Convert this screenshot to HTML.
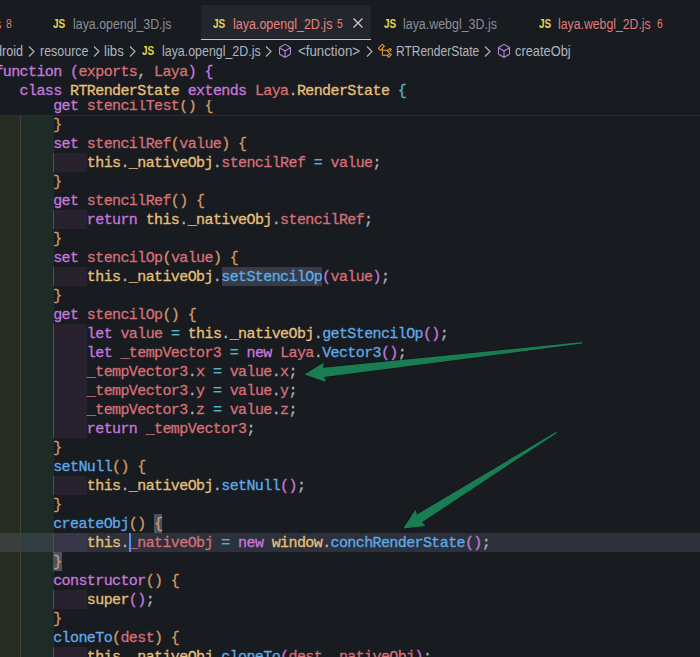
<!DOCTYPE html>
<html><head><meta charset="utf-8">
<style>
html,body{margin:0;padding:0;width:700px;height:657px;overflow:hidden;background:#181b20}
body{position:relative;font-family:"Liberation Sans",sans-serif}
.abs{position:absolute}
.ln{position:absolute;left:-14.0px;margin-top:1px;height:19px;line-height:19px;font-family:"Liberation Mono",monospace;font-size:15px;letter-spacing:-0.6px;-webkit-text-stroke:0.3px;white-space:pre;color:#abb2bf}
.hl{background:#373c47}
.bm{background:#3e4350;box-shadow:inset 0 0 0 1px #4b505c}
.ui{position:absolute;font-size:14px;white-space:pre;line-height:16px;transform-origin:0 0}
.js{position:absolute;font-weight:bold;font-size:12.5px;color:#e3d64a;line-height:16px;transform:scaleX(0.8);transform-origin:0 0}
</style></head><body>
<div class="abs" style="left:201px;top:5px;width:170px;height:35px;background:#23262d"></div>
<div class="abs" style="left:201px;top:39px;width:170px;height:1px;background:#c8c8c8"></div>
<div class="ui" style="left:-5px;top:16px;color:#de7e7a;transform:scaleX(0.9)">s</div>
<div class="ui" style="font-size:13px;margin-top:0px;left:5.5px;top:16px;color:#de7e7a;transform:scaleX(0.8)">8</div>
<div class="js" style="left:53px;top:16px">JS</div>
<div class="ui" style="left:73.1px;top:16px;color:#8a8f98;transform:scaleX(0.885)">laya.opengl_3D.js</div>
<div class="js" style="left:213px;top:16px">JS</div>
<div class="ui" style="left:232.5px;top:16px;color:#e8827f;transform:scaleX(0.893)">laya.opengl_2D.js</div>
<div class="ui" style="font-size:13px;margin-top:0px;left:336.5px;top:16px;color:#e8827f;transform:scaleX(0.8)">5</div>
<svg class="abs" style="left:352.5px;top:18px" width="10" height="10" viewBox="0 0 10 10"><path d="M0.5 0.5L9.5 9.5M9.5 0.5L0.5 9.5" stroke="#d0d0d0" stroke-width="1.2"/></svg>
<div class="js" style="left:384px;top:16px">JS</div>
<div class="ui" style="left:403.4px;top:16px;color:#8a8f98;transform:scaleX(0.887)">laya.webgl_3D.js</div>
<div class="js" style="left:539px;top:16px">JS</div>
<div class="ui" style="left:558.1px;top:16px;color:#de7e7a;transform:scaleX(0.876)">laya.webgl_2D.js</div>
<div class="ui" style="font-size:13px;margin-top:0px;left:656.5px;top:16px;color:#de7e7a;transform:scaleX(0.8)">6</div>
<div class="ui" style="left:-5.5px;top:43px;color:#b0b6bf;transform:scaleX(0.9)">droid</div>
<svg class="abs" style="left:27.5px;top:46px" width="7" height="11" viewBox="0 0 7 11"><path d="M1 0.5L6 5.5L1 10.5" fill="none" stroke="#b0b6bf" stroke-width="1.1"/></svg>
<svg class="abs" style="left:93px;top:46px" width="7" height="11" viewBox="0 0 7 11"><path d="M1 0.5L6 5.5L1 10.5" fill="none" stroke="#b0b6bf" stroke-width="1.1"/></svg>
<svg class="abs" style="left:129px;top:46px" width="7" height="11" viewBox="0 0 7 11"><path d="M1 0.5L6 5.5L1 10.5" fill="none" stroke="#b0b6bf" stroke-width="1.1"/></svg>
<svg class="abs" style="left:264.5px;top:46px" width="7" height="11" viewBox="0 0 7 11"><path d="M1 0.5L6 5.5L1 10.5" fill="none" stroke="#b0b6bf" stroke-width="1.1"/></svg>
<svg class="abs" style="left:365.5px;top:46px" width="7" height="11" viewBox="0 0 7 11"><path d="M1 0.5L6 5.5L1 10.5" fill="none" stroke="#b0b6bf" stroke-width="1.1"/></svg>
<svg class="abs" style="left:483.5px;top:46px" width="7" height="11" viewBox="0 0 7 11"><path d="M1 0.5L6 5.5L1 10.5" fill="none" stroke="#b0b6bf" stroke-width="1.1"/></svg>
<div class="ui" style="left:39.8px;top:43px;color:#b0b6bf;transform:scaleX(0.889)">resource</div>
<div class="ui" style="left:104.1px;top:43px;color:#b0b6bf;transform:scaleX(0.94)">libs</div>
<div class="js" style="left:142px;top:43px">JS</div>
<div class="ui" style="left:161.9px;top:43px;color:#b0b6bf;transform:scaleX(0.886)">laya.opengl_2D.js</div>
<svg class="abs" style="left:277px;top:43px" width="16" height="16" viewBox="0 0 16 16"><path fill="#bd8ce3" d="M13.51 4l-5-3h-1l-5 3-.49.86v6l.49.85 5 3h1l5-3 .49-.85v-6L13.51 4zm-6 9.56l-4.5-2.7V5.7l4.5 2.45v5.41zM3.27 4.7l4.74-2.84 4.74 2.84-4.74 2.59L3.27 4.7zM13 10.86l-4.5 2.7V8.15L13 5.7v5.16z"/></svg>
<div class="ui" style="left:297.8px;top:43px;color:#b0b6bf;transform:scaleX(0.949)">&lt;function&gt;</div>
<svg class="abs" style="left:377px;top:43px" width="16" height="16" viewBox="0 0 16 16"><path fill="#f0a03a" d="M11.34 9.71h.71l2.67-2.67v-.71L13.38 5h-.7l-1.82 1.81h-5V5.56l1.86-1.86V3l-2-2H5L1 5v.71l2 2h.71l1.14-1.15v5.79l.5.5H10v.52l1.33 1.34h.71l2.67-2.67v-.71L13.37 10h-.7l-1.86 1.85h-5v-4H10v.48l1.34 1.38zm1.69-3.65l.63.63-2 2-.63-.63 2-2zm0 5l.63.63-2 2-.63-.63 2-2zM3.35 6.65l-1.29-1.3 3.29-3.29 1.3 1.29-3.3 3.3z"/></svg>
<div class="ui" style="left:395.5px;top:43px;color:#b0b6bf;transform:scaleX(0.857)">RTRenderState</div>
<svg class="abs" style="left:496px;top:43px" width="16" height="16" viewBox="0 0 16 16"><path fill="#bd8ce3" d="M13.51 4l-5-3h-1l-5 3-.49.86v6l.49.85 5 3h1l5-3 .49-.85v-6L13.51 4zm-6 9.56l-4.5-2.7V5.7l4.5 2.45v5.41zM3.27 4.7l4.74-2.84 4.74 2.84-4.74 2.59L3.27 4.7zM13 10.86l-4.5 2.7V8.15L13 5.7v5.16z"/></svg>
<div class="ui" style="left:514.7px;top:43px;color:#b0b6bf;transform:scaleX(0.917)">createObj</div>
<div class="abs" style="left:0;top:533px;width:700px;height:19px;background:#2c313c"></div>
<div class="abs" style="left:0;top:115px;width:20px;height:542px;background:rgba(255,255,64,0.07)"></div>
<div class="abs" style="left:20px;top:115px;width:1px;height:542px;background:#3c4441"></div>
<div class="abs" style="left:21px;top:115px;width:33px;height:542px;background:rgba(127,255,127,0.07)"></div>
<div class="abs" style="left:54px;top:153px;width:33px;height:19px;background:rgba(255,127,255,0.07)"></div>
<div class="abs" style="left:53px;top:153px;width:1px;height:19px;background:#4a4e57"></div>
<div class="abs" style="left:54px;top:210px;width:33px;height:19px;background:rgba(255,127,255,0.07)"></div>
<div class="abs" style="left:53px;top:210px;width:1px;height:19px;background:#4a4e57"></div>
<div class="abs" style="left:54px;top:267px;width:33px;height:19px;background:rgba(255,127,255,0.07)"></div>
<div class="abs" style="left:53px;top:267px;width:1px;height:19px;background:#4a4e57"></div>
<div class="abs" style="left:54px;top:324px;width:33px;height:19px;background:rgba(255,127,255,0.07)"></div>
<div class="abs" style="left:53px;top:324px;width:1px;height:19px;background:#4a4e57"></div>
<div class="abs" style="left:54px;top:343px;width:33px;height:19px;background:rgba(255,127,255,0.07)"></div>
<div class="abs" style="left:53px;top:343px;width:1px;height:19px;background:#4a4e57"></div>
<div class="abs" style="left:54px;top:362px;width:33px;height:19px;background:rgba(255,127,255,0.07)"></div>
<div class="abs" style="left:53px;top:362px;width:1px;height:19px;background:#4a4e57"></div>
<div class="abs" style="left:54px;top:381px;width:33px;height:19px;background:rgba(255,127,255,0.07)"></div>
<div class="abs" style="left:53px;top:381px;width:1px;height:19px;background:#4a4e57"></div>
<div class="abs" style="left:54px;top:400px;width:33px;height:19px;background:rgba(255,127,255,0.07)"></div>
<div class="abs" style="left:53px;top:400px;width:1px;height:19px;background:#4a4e57"></div>
<div class="abs" style="left:54px;top:419px;width:33px;height:19px;background:rgba(255,127,255,0.07)"></div>
<div class="abs" style="left:53px;top:419px;width:1px;height:19px;background:#4a4e57"></div>
<div class="abs" style="left:54px;top:476px;width:33px;height:19px;background:rgba(255,127,255,0.07)"></div>
<div class="abs" style="left:53px;top:476px;width:1px;height:19px;background:#4a4e57"></div>
<div class="abs" style="left:54px;top:533px;width:33px;height:19px;background:rgba(255,127,255,0.07)"></div>
<div class="abs" style="left:53px;top:533px;width:1px;height:19px;background:#4a4e57"></div>
<div class="abs" style="left:54px;top:590px;width:33px;height:19px;background:rgba(255,127,255,0.07)"></div>
<div class="abs" style="left:53px;top:590px;width:1px;height:19px;background:#4a4e57"></div>
<div class="abs" style="left:54px;top:647px;width:33px;height:19px;background:rgba(255,127,255,0.07)"></div>
<div class="abs" style="left:53px;top:647px;width:1px;height:19px;background:#4a4e57"></div>
<div class="abs" style="left:221.6px;top:267px;width:100.8px;height:19px;background:#373c47"></div>
<div class="abs" style="left:154px;top:514px;width:8px;height:19px;background:#4a5365"></div>
<div class="abs" style="left:53px;top:552px;width:9px;height:19px;background:#4a5365"></div>
<div class="ln" style="top:115px">        <span style="color:#d19a66">}</span></div>
<div class="ln" style="top:134px">        <span style="color:#c678dd">set</span> <span style="color:#d66f77">stencilRef</span><span style="color:#d19a66">(</span><span style="color:#d66f77">value</span><span style="color:#d19a66">)</span> <span style="color:#d19a66">{</span></div>
<div class="ln" style="top:153px">            <span style="color:#e5c07b">this</span><span style="color:#abb2bf">.</span><span style="color:#e5c07b">_nativeObj</span><span style="color:#abb2bf">.</span><span style="color:#d66f77">stencilRef</span> <span style="color:#56b6c2">=</span> <span style="color:#d66f77">value</span><span style="color:#abb2bf">;</span></div>
<div class="ln" style="top:172px">        <span style="color:#d19a66">}</span></div>
<div class="ln" style="top:191px">        <span style="color:#c678dd">get</span> <span style="color:#d66f77">stencilRef</span><span style="color:#d19a66">()</span> <span style="color:#d19a66">{</span></div>
<div class="ln" style="top:210px">            <span style="color:#c678dd">return</span> <span style="color:#e5c07b">this</span><span style="color:#abb2bf">.</span><span style="color:#e5c07b">_nativeObj</span><span style="color:#abb2bf">.</span><span style="color:#d66f77">stencilRef</span><span style="color:#abb2bf">;</span></div>
<div class="ln" style="top:229px">        <span style="color:#d19a66">}</span></div>
<div class="ln" style="top:248px">        <span style="color:#c678dd">set</span> <span style="color:#d66f77">stencilOp</span><span style="color:#d19a66">(</span><span style="color:#d66f77">value</span><span style="color:#d19a66">)</span> <span style="color:#d19a66">{</span></div>
<div class="ln" style="top:267px">            <span style="color:#e5c07b">this</span><span style="color:#abb2bf">.</span><span style="color:#e5c07b">_nativeObj</span><span style="color:#abb2bf">.</span><span style="color:#5eaae8">setStencilOp</span><span style="color:#c678dd">(</span><span style="color:#d66f77">value</span><span style="color:#c678dd">)</span><span style="color:#abb2bf">;</span></div>
<div class="ln" style="top:286px">        <span style="color:#d19a66">}</span></div>
<div class="ln" style="top:305px">        <span style="color:#c678dd">get</span> <span style="color:#d66f77">stencilOp</span><span style="color:#d19a66">()</span> <span style="color:#d19a66">{</span></div>
<div class="ln" style="top:324px">            <span style="color:#c678dd">let</span> <span style="color:#d66f77">value</span> <span style="color:#56b6c2">=</span> <span style="color:#e5c07b">this</span><span style="color:#abb2bf">.</span><span style="color:#e5c07b">_nativeObj</span><span style="color:#abb2bf">.</span><span style="color:#5eaae8">getStencilOp</span><span style="color:#c678dd">()</span><span style="color:#abb2bf">;</span></div>
<div class="ln" style="top:343px">            <span style="color:#c678dd">let</span> <span style="color:#d66f77">_tempVector3</span> <span style="color:#56b6c2">=</span> <span style="color:#c678dd">new</span> <span style="color:#d66f77">Laya</span><span style="color:#abb2bf">.</span><span style="color:#5eaae8">Vector3</span><span style="color:#c678dd">()</span><span style="color:#abb2bf">;</span></div>
<div class="ln" style="top:362px">            <span style="color:#d66f77">_tempVector3</span><span style="color:#abb2bf">.</span><span style="color:#d66f77">x</span> <span style="color:#56b6c2">=</span> <span style="color:#d66f77">value</span><span style="color:#abb2bf">.</span><span style="color:#d66f77">x</span><span style="color:#abb2bf">;</span></div>
<div class="ln" style="top:381px">            <span style="color:#d66f77">_tempVector3</span><span style="color:#abb2bf">.</span><span style="color:#d66f77">y</span> <span style="color:#56b6c2">=</span> <span style="color:#d66f77">value</span><span style="color:#abb2bf">.</span><span style="color:#d66f77">y</span><span style="color:#abb2bf">;</span></div>
<div class="ln" style="top:400px">            <span style="color:#d66f77">_tempVector3</span><span style="color:#abb2bf">.</span><span style="color:#d66f77">z</span> <span style="color:#56b6c2">=</span> <span style="color:#d66f77">value</span><span style="color:#abb2bf">.</span><span style="color:#d66f77">z</span><span style="color:#abb2bf">;</span></div>
<div class="ln" style="top:419px">            <span style="color:#c678dd">return</span> <span style="color:#d66f77">_tempVector3</span><span style="color:#abb2bf">;</span></div>
<div class="ln" style="top:438px">        <span style="color:#d19a66">}</span></div>
<div class="ln" style="top:457px">        <span style="color:#5eaae8">setNull</span><span style="color:#d19a66">()</span> <span style="color:#d19a66">{</span></div>
<div class="ln" style="top:476px">            <span style="color:#e5c07b">this</span><span style="color:#abb2bf">.</span><span style="color:#e5c07b">_nativeObj</span><span style="color:#abb2bf">.</span><span style="color:#5eaae8">setNull</span><span style="color:#c678dd">()</span><span style="color:#abb2bf">;</span></div>
<div class="ln" style="top:495px">        <span style="color:#d19a66">}</span></div>
<div class="ln" style="top:514px">        <span style="color:#5eaae8">createObj</span><span style="color:#d19a66">()</span> <span style="color:#d19a66">{</span></div>
<div class="ln" style="top:533px">            <span style="color:#e5c07b">this</span><span style="color:#abb2bf">.</span><span style="color:#d66f77">_nativeObj</span> <span style="color:#56b6c2">=</span> <span style="color:#c678dd">new</span> <span style="color:#e5c07b">window</span><span style="color:#abb2bf">.</span><span style="color:#5eaae8">conchRenderState</span><span style="color:#c678dd">()</span><span style="color:#abb2bf">;</span></div>
<div class="ln" style="top:552px">        <span style="color:#d19a66">}</span></div>
<div class="ln" style="top:571px">        <span style="color:#c678dd">constructor</span><span style="color:#d19a66">()</span> <span style="color:#d19a66">{</span></div>
<div class="ln" style="top:590px">            <span style="color:#e5c07b">super</span><span style="color:#c678dd">()</span><span style="color:#abb2bf">;</span></div>
<div class="ln" style="top:609px">        <span style="color:#d19a66">}</span></div>
<div class="ln" style="top:628px">        <span style="color:#5eaae8">cloneTo</span><span style="color:#d19a66">(</span><span style="color:#d66f77">dest</span><span style="color:#d19a66">)</span> <span style="color:#d19a66">{</span></div>
<div class="ln" style="top:647px">            <span style="color:#e5c07b">this</span><span style="color:#abb2bf">.</span><span style="color:#e5c07b">_nativeObj</span><span style="color:#abb2bf">.</span><span style="color:#5eaae8">cloneTo</span><span style="color:#c678dd">(</span><span style="color:#d66f77">dest</span><span style="color:#abb2bf">.</span><span style="color:#d66f77">_nativeObj</span><span style="color:#c678dd">)</span><span style="color:#abb2bf">;</span></div>
<div class="abs" style="left:0;top:62px;width:700px;height:53px;background:#181b20"></div>
<div class="abs" style="left:0;top:115px;width:700px;height:1px;background:#2a2d33"></div>
<div class="ln" style="top:62px"><span style="color:#d19a66">(</span><span style="color:#c678dd">function</span> <span style="color:#c678dd">(</span><span style="color:#d66f77">exports</span><span style="color:#abb2bf">,</span> <span style="color:#d66f77">Laya</span><span style="color:#c678dd">)</span> <span style="color:#c678dd">{</span></div>
<div class="ln" style="top:81px">    <span style="color:#c678dd">class</span> <span style="color:#e5c07b">RTRenderState</span> <span style="color:#c678dd">extends</span> <span style="color:#d66f77">Laya</span><span style="color:#abb2bf">.</span><span style="color:#e5c07b">RenderState</span> <span style="color:#56b6c2">{</span></div>
<div class="abs" style="left:0;top:100px;width:700px;height:15px;overflow:hidden"><div class="ln" style="top:-4px">        <span style="color:#c678dd">get</span> <span style="color:#d66f77">stencilTest</span><span style="color:#d19a66">()</span> <span style="color:#d19a66">{</span></div></div>
<div class="abs" style="left:129px;top:533px;width:2px;height:19px;background:#528bff"></div>
<svg class="abs" style="left:0;top:0" width="700" height="657"><polygon points="304.4,374.6 323.8,362.6 323.0,367.7 582.2,342.1 582.4,343.5 324.1,377.1 326.0,381.9" fill="#1a7c53" stroke="rgba(0,10,5,0.45)" stroke-width="1.2" paint-order="stroke"/><polygon points="403.2,528.6 415.5,509.4 417.0,514.4 556.2,431.7 557.0,432.9 422.0,522.3 425.8,525.9" fill="#1a7c53" stroke="rgba(0,10,5,0.45)" stroke-width="1.2" paint-order="stroke"/></svg>
</body></html>
